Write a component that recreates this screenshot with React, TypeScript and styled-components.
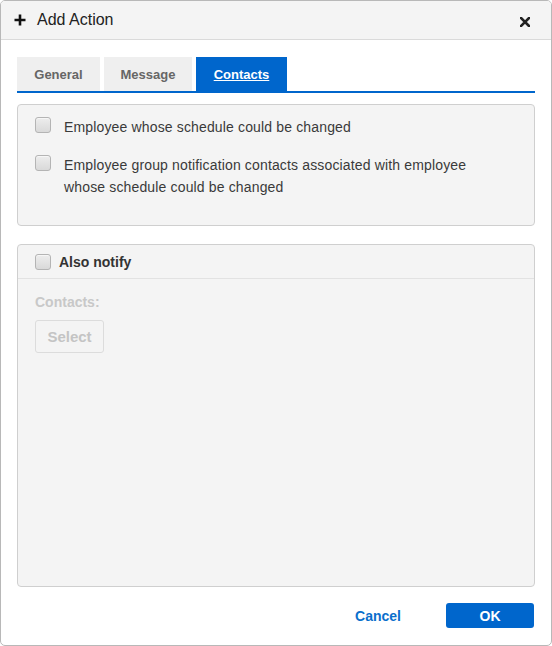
import { createGlobalStyle } from 'styled-components';
import styled from 'styled-components';

const GlobalStyle = createGlobalStyle`
  html, body {
    margin: 0;
    padding: 0;
    background: #ffffff;
  }
  body {
    font-family: "Liberation Sans", Arial, sans-serif;
    color: #333333;
  }
  * {
    box-sizing: border-box;
  }
`;

const Dialog = styled.div`
  width: 552px;
  height: 646px;
  border: 1px solid #b8b8b8;
  border-radius: 5px;
  background: #ffffff;
  display: flex;
  flex-direction: column;
  overflow: hidden;
`;

const Header = styled.div`
  height: 39px;
  flex: none;
  display: flex;
  align-items: center;
  padding: 0 21px 0 13px;
  background: #f4f4f4;
  border-bottom: 1px solid #dadada;
`;

const Title = styled.div`
  flex: 1;
  display: flex;
  align-items: center;
  gap: 11px;
  font-size: 16px;
  color: #222222;
`;

const CloseButton = styled.button`
  border: 0;
  padding: 0;
  margin-top: 3px;
  background: transparent;
  display: flex;
  cursor: pointer;
`;

const Body = styled.div`
  flex: 1;
  display: flex;
  flex-direction: column;
  padding: 17px 16px 0 16px;
  min-height: 0;
`;

const Tabs = styled.div`
  display: flex;
  height: 36px;
  border-bottom: 2px solid #0066cc;
`;

interface TabProps {
  $active?: boolean;
  $width: number;
}

const Tab = styled.div<TabProps>`
  width: ${(p) => p.$width}px;
  height: 34px;
  margin-right: 4px;
  display: flex;
  align-items: center;
  justify-content: center;
  font-size: 13px;
  font-weight: bold;
  background: ${(p) => (p.$active ? '#0066cc' : '#efefef')};
  color: ${(p) => (p.$active ? '#ffffff' : '#666666')};
  text-decoration: ${(p) => (p.$active ? 'underline' : 'none')};
  cursor: pointer;
`;

const Panel = styled.div`
  margin-top: 11px;
  background: #f4f4f4;
  border: 1px solid #cfcfcf;
  border-radius: 4px;
  padding: 11px 17px 27px;
  display: flex;
  flex-direction: column;
  gap: 16px;
`;

const NotifyPanel = styled.div`
  margin-top: 18px;
  flex: 1;
  background: #f4f4f4;
  border: 1px solid #cfcfcf;
  border-radius: 4px;
  display: flex;
  flex-direction: column;
`;

const NotifyHeader = styled.div`
  height: 34px;
  padding: 0 17px;
  display: flex;
  align-items: center;
  gap: 8px;
  border-bottom: 1px solid #e2e2e2;
  font-size: 14px;
  font-weight: bold;
  color: #333333;
`;

const NotifyContent = styled.div`
  padding: 15px 17px;
  display: flex;
  flex-direction: column;
  gap: 9px;
`;

const Label = styled.div`
  font-size: 14px;
  font-weight: bold;
  color: #c8c8c8;
  line-height: 17px;
`;

const GhostButton = styled.button`
  width: 69px;
  height: 33px;
  border: 1px solid #dcdcdc;
  border-radius: 3px;
  background: #f4f4f4;
  color: #c4c4c4;
  font-family: inherit;
  font-size: 15px;
  font-weight: bold;
  padding: 0;
`;

const Row = styled.label`
  display: flex;
  align-items: flex-start;
  gap: 13px;
  font-size: 14px;
  line-height: 22px;
  letter-spacing: 0.15px;
  color: #3a3a3a;
`;

const Box = styled.span<{ $top?: number }>`
  flex: none;
  width: 16px;
  height: 16px;
  margin-top: ${(p) => p.$top ?? 0}px;
  border: 1px solid #b4b4b4;
  border-radius: 3px;
  background: linear-gradient(#ededed, #d9d9d9);
  box-shadow: inset 0 1px 0 #f6f6f6;
`;

const RowText = styled.span`
  max-width: 420px;
`;

const Footer = styled.div`
  flex: none;
  display: flex;
  justify-content: flex-end;
  align-items: center;
  gap: 45px;
  padding: 16px 17px 17px;
`;

const LinkButton = styled.button`
  border: 0;
  background: transparent;
  padding: 0;
  font-family: inherit;
  font-size: 14px;
  font-weight: bold;
  color: #0b6fcc;
  cursor: pointer;
`;

const PrimaryButton = styled.button`
  width: 88px;
  height: 25px;
  border: 0;
  border-radius: 3px;
  background: #0066cc;
  color: #ffffff;
  font-family: inherit;
  font-size: 14px;
  font-weight: bold;
  padding: 0;
  cursor: pointer;
`;

const PlusIcon = () => (
  <svg width="12" height="12" viewBox="0 0 12 12">
    <path d="M6 0.5v11M0.5 6h11" stroke="#111" strokeWidth="2.6" />
  </svg>
);

const CloseIcon = () => (
  <svg width="10" height="10" viewBox="0 0 10 10">
    <path d="M1 1l8 8M9 1l-8 8" stroke="#222" strokeWidth="2.6" strokeLinecap="square" />
  </svg>
);

export default function App() {
  return (
    <>
      <GlobalStyle />
      <Dialog>
        <Header>
          <Title>
            <PlusIcon />
            <span>Add Action</span>
          </Title>
          <CloseButton aria-label="Close">
            <CloseIcon />
          </CloseButton>
        </Header>
        <Body>
          <Tabs>
            <Tab $width={83}>General</Tab>
            <Tab $width={88}>Message</Tab>
            <Tab $width={91} $active>Contacts</Tab>
          </Tabs>
          <Panel>
            <Row>
              <Box $top={1} />
              <RowText>Employee whose schedule could be changed</RowText>
            </Row>
            <Row>
              <Box $top={1} />
              <RowText>
                Employee group notification contacts associated with employee whose schedule could be changed
              </RowText>
            </Row>
          </Panel>
          <NotifyPanel>
            <NotifyHeader>
              <Box />
              <span>Also notify</span>
            </NotifyHeader>
            <NotifyContent>
              <Label>Contacts:</Label>
              <GhostButton disabled>Select</GhostButton>
            </NotifyContent>
          </NotifyPanel>
        </Body>
        <Footer>
          <LinkButton>Cancel</LinkButton>
          <PrimaryButton>OK</PrimaryButton>
        </Footer>
      </Dialog>
    </>
  );
}
